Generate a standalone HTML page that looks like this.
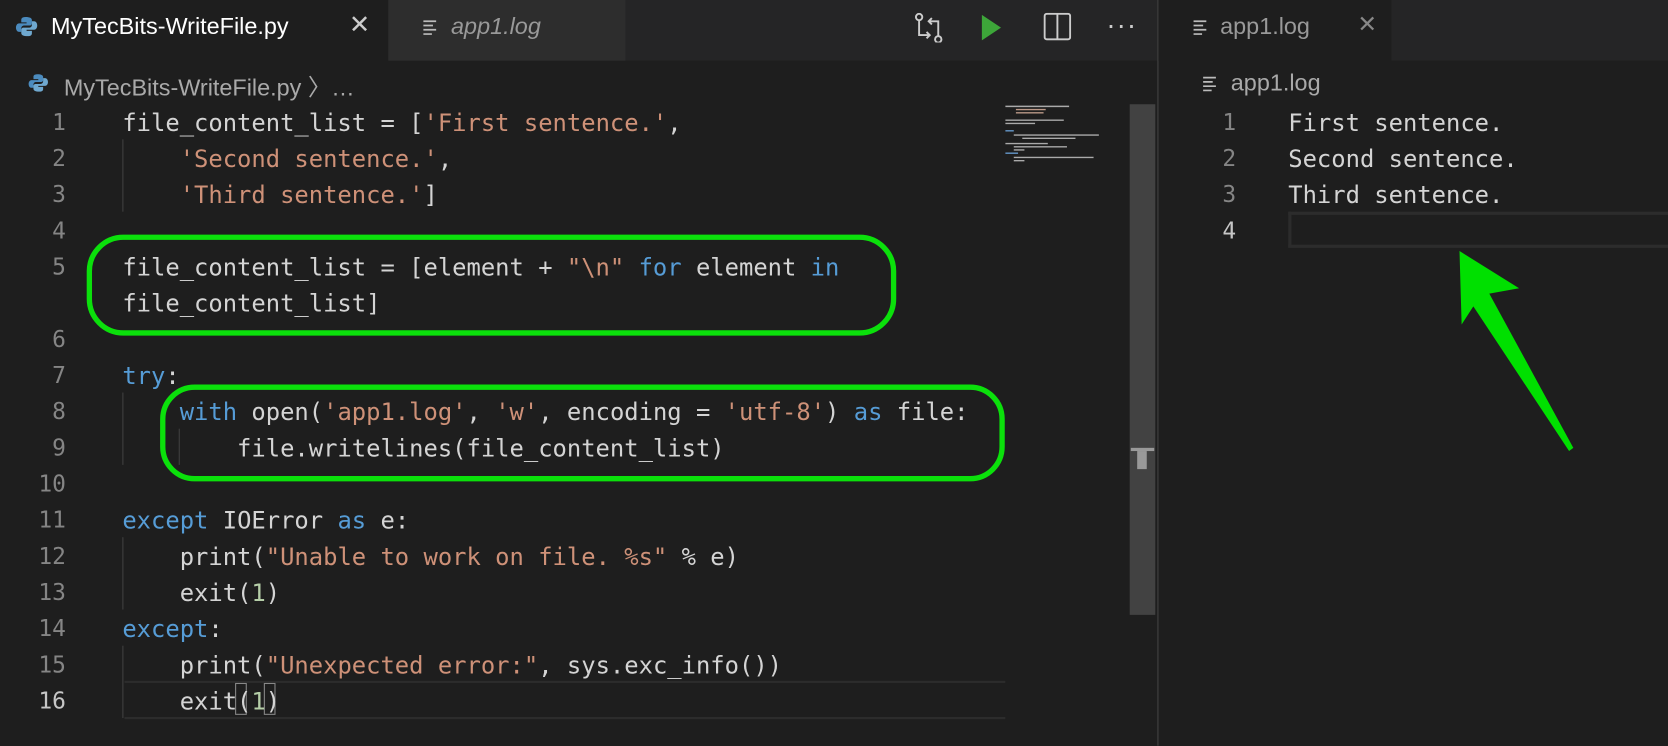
<!DOCTYPE html>
<html><head><meta charset="utf-8"><style>
html,body{margin:0;padding:0;background:#1e1e1e;overflow:hidden;width:1668px;height:746px}
#w{position:absolute;left:0;top:0;width:1568px;height:701px;transform:scale(1.06378);transform-origin:0 0;background:#1e1e1e;font-family:"Liberation Sans",sans-serif}
.a{position:absolute}
.code{font-family:"DejaVu Sans Mono","Liberation Mono",monospace;font-size:22.4px;color:#d4d4d4;white-space:pre;line-height:34px}
.k{color:#569cd6}.s{color:#ce9178}.n{color:#b5cea8}
.ln{position:absolute;width:40px;text-align:right;color:#858585;font-family:"DejaVu Sans Mono",monospace;font-size:21.5px;line-height:34px}
.g{position:absolute;width:1px;background:#404040}
</style></head><body><div id="w">
<div class="a" style="left:0;top:0;width:1088px;height:57px;background:#252526"></div>
<div class="a" style="left:0;top:0;width:365px;height:57px;background:#1e1e1e"></div>
<div class="a" style="left:365px;top:0;width:223px;height:57px;background:#2d2d2d"></div>
<svg class="a" style="left:14px;top:14px" width="22" height="22" viewBox="0 0 22 22"><path d="M10 2c-4 0-4 2-4 3v2h5v1H4c-2 0-3 2-3 4s1 4 3 4h2v-3c0-2 1-3 3-3h5c1 0 2-1 2-2V5c0-2-2-3-6-3z" fill="#4b8bbe"/><path d="M12 20c4 0 4-2 4-3v-2h-5v-1h7c2 0 3-2 3-4s-1-4-3-4h-2v3c0 2-1 3-3 3H8c-1 0-2 1-2 2v3c0 2 2 3 6 3z" fill="#6fa8cf"/></svg>
<div class="a" style="left:48px;top:12px;font-size:22px;color:#fff">MyTecBits-WriteFile.py</div>
<div class="a" style="left:328px;top:9px;font-size:24px;color:#ccc">✕</div>
<svg class="a" style="left:397px;top:18px" width="16" height="16"><path d="M1 2h12M1 6h9M1 10h12M1 14h8" stroke="#bbb" stroke-width="1.6"/></svg>
<div class="a" style="left:424px;top:12px;font-size:22px;color:#999;font-style:italic">app1.log</div>
<svg class="a" style="left:860px;top:12px" width="28" height="28" viewBox="0 0 28 28" fill="none" stroke="#ccc" stroke-width="1.8"><circle cx="4" cy="4" r="3"/><circle cx="22" cy="25" r="3"/><path d="M4 7v14h10M11 18l3 3-3 3M22 22V8h-9M16 5l-3 3 3 3"/></svg>
<svg class="a" style="left:922px;top:14px" width="22" height="24"><path d="M1 0L19 12 1 24z" fill="#3da639"/></svg>
<svg class="a" style="left:981px;top:12px" width="26" height="26"><rect x="1" y="1" width="24" height="24" rx="2" fill="none" stroke="#ccc" stroke-width="1.8"/><path d="M13 1v24" stroke="#ccc" stroke-width="1.8"/></svg>
<div class="a" style="left:1040px;top:8px;font-size:26px;color:#ccc;letter-spacing:1px">···</div>
<svg class="a" style="left:26px;top:68px" width="20" height="20" viewBox="0 0 22 22"><path d="M10 2c-4 0-4 2-4 3v2h5v1H4c-2 0-3 2-3 4s1 4 3 4h2v-3c0-2 1-3 3-3h5c1 0 2-1 2-2V5c0-2-2-3-6-3z" fill="#4b8bbe"/><path d="M12 20c4 0 4-2 4-3v-2h-5v-1h7c2 0 3-2 3-4s-1-4-3-4h-2v3c0 2-1 3-3 3H8c-1 0-2 1-2 2v3c0 2 2 3 6 3z" fill="#6fa8cf"/></svg>
<div class="a" style="left:60px;top:65px;font-size:22px;color:#a9a9a9">MyTecBits-WriteFile.py 〉…</div>
<div class="ln" style="left:22px;top:99px">1<br>2<br>3<br>4<br>5<br><br>6<br>7<br>8<br>9<br>10<br>11<br>12<br>13<br>14<br>15<br><span style="color:#c6c6c6">16</span></div>
<div class="g" style="left:115px;top:131px;height:68px"></div>
<div class="g" style="left:115px;top:369px;height:68px"></div>
<div class="g" style="left:168px;top:403px;height:34px"></div>
<div class="g" style="left:115px;top:505px;height:68px"></div>
<div class="g" style="left:115px;top:607px;height:68px"></div>
<div class="a" style="left:117px;top:640px;width:828px;height:32px;border-top:2px solid #2c2c2c;border-bottom:2px solid #2c2c2c"></div>
<div class="a" style="left:221px;top:642px;width:11px;height:30px;border:1px solid #888;box-sizing:border-box"></div>
<div class="a" style="left:248px;top:642px;width:11px;height:30px;border:1px solid #888;box-sizing:border-box"></div>
<div class="a code" style="left:115px;top:99px">file_content_list = [<span class="s">'First sentence.'</span>,
    <span class="s">'Second sentence.'</span>,
    <span class="s">'Third sentence.'</span>]

file_content_list = [element + <span class="s">"\n"</span> <span class="k">for</span> element <span class="k">in</span>
file_content_list]

<span class="k">try</span>:
    <span class="k">with</span> open(<span class="s">'app1.log'</span>, <span class="s">'w'</span>, encoding = <span class="s">'utf-8'</span>) <span class="k">as</span> file:
        file.writelines(file_content_list)

<span class="k">except</span> IOError <span class="k">as</span> e:
    print(<span class="s">"Unable to work on file. %s"</span> % e)
    exit(<span class="n">1</span>)
<span class="k">except</span>:
    print(<span class="s">"Unexpected error:"</span>, sys.exc_info())
    exit(<span class="n">1</span>)</div>
<svg class="a" style="left:945px;top:97px" width="115" height="75">
<g stroke-width="1.3"><path d="M0 3h60" stroke="#aaa"/><path d="M10 6h28" stroke="#b98"/><path d="M10 9h26" stroke="#b98"/><path d="M0 16h55M0 19h28" stroke="#aaa"/><path d="M0 26h8" stroke="#69c"/><path d="M8 30h80" stroke="#aaa"/><path d="M16 33h50" stroke="#aaa"/><path d="M0 38h40M8 41h50M8 44h10" stroke="#aaa"/><path d="M0 47h12" stroke="#69c"/><path d="M8 51h75M8 54h10" stroke="#aaa"/></g></svg>
<div class="a" style="left:1062px;top:98px;width:24px;height:480px;background:#424242"></div>
<div class="a" style="left:1063px;top:421px;width:22px;height:3px;background:#999"></div>
<div class="a" style="left:1069px;top:424px;width:9px;height:17px;background:#999"></div>
<div class="a" style="left:1088px;top:0;width:1px;height:701px;background:#444"></div>
<div class="a" style="left:1089px;top:0;width:479px;height:57px;background:#252526"></div>
<div class="a" style="left:1089px;top:0;width:219px;height:57px;background:#1e1e1e"></div>
<svg class="a" style="left:1121px;top:18px" width="16" height="16"><path d="M1 2h12M1 6h9M1 10h12M1 14h8" stroke="#bbb" stroke-width="1.6"/></svg>
<div class="a" style="left:1147px;top:12px;font-size:22px;color:#999">app1.log</div>
<div class="a" style="left:1276px;top:10px;font-size:22px;color:#888">✕</div>
<svg class="a" style="left:1130px;top:71px" width="16" height="16"><path d="M1 2h12M1 6h9M1 10h12M1 14h8" stroke="#bbb" stroke-width="1.6"/></svg>
<div class="a" style="left:1157px;top:65px;font-size:22px;color:#a9a9a9">app1.log</div>
<div class="ln" style="left:1122px;top:99px;width:40px">1<br>2<br>3<br><span style="color:#c6c6c6">4</span></div>
<div class="a code" style="left:1211px;top:99px">First sentence.
Second sentence.
Third sentence.</div>
<div class="a" style="left:1211px;top:199px;width:357px;height:34px;border:3px solid #2c2c2c;box-sizing:border-box;border-right:none"></div>
<svg class="a" style="left:0;top:0" width="1568" height="701">
<rect x="84" y="223" width="756" height="90" rx="32" fill="none" stroke="#0be00b" stroke-width="5"/>
<rect x="153" y="364" width="789" height="86" rx="30" fill="none" stroke="#0be00b" stroke-width="5"/>
<path d="M1372 236L1428 271 1400 276 1479 421 1475 424 1385 288 1374 305z" fill="#00e000"/>
</svg>
</div></body></html>
